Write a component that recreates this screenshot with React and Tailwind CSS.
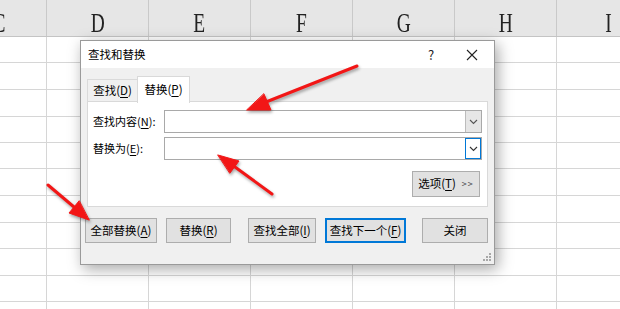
const cols = ["D", "E", "F", "G", "H"];
const rowHeights = [26, 27, 27, 26, 26, 27, 27, 26, 27, 26, 27];

const U = ({ children }) => <span className="underline underline-offset-2">{children}</span>;

const Chevron = ({ color = "#555" }) => (
    <svg width="9" height="6" viewBox="0 0 9 6">
        <path d="M1 1 L4.5 4.5 L8 1" fill="none" stroke={color} strokeWidth="1.1" />
    </svg>
);

const Btn = ({ children, className = "", focused }) => (
    <div
        className={`h-[25px] flex items-center justify-center bg-[#e1e1e1] text-[11.5px] text-black ${focused ? "border-2 border-[#0078d7]" : "border border-[#adadad]"} ${className}`}
    >
        {children}
    </div>
);

const ComboBox = ({ focused }) => (
    <div className="flex-1 h-[23px] flex border border-[#a9a9a9] bg-white">
        <div className="flex-1"></div>
        {focused ? (
            <div className="w-[16px] h-full flex items-center justify-center border border-[#0078d7] bg-white">
                <Chevron color="#333" />
            </div>
        ) : (
            <div className="w-[16px] h-full flex items-center justify-center border-l border-[#bcbcbc] bg-[#e6e6e6]">
                <Chevron />
            </div>
        )}
    </div>
);

const Sheet = () => (
    <div className="flex flex-col w-[620px] h-[309px] overflow-hidden bg-white">
        <div className="flex h-[37px] bg-[#e6e6e6] border-b border-[#c4c4c4] shrink-0">
            <div className="w-[47px] shrink-0 border-r border-[#c9c9c9] overflow-hidden relative">
                <div className="w-[102px] ml-[-52px] text-center pt-[10px]">
                    <span className="inline-block text-[27px] leading-[27px] scale-x-[0.72] text-[#222]">C</span>
                </div>
            </div>
            {cols.map((c) => (
                <div key={c} className="w-[102px] shrink-0 border-r border-[#c9c9c9] text-center pt-[10px]">
                    <span className="inline-block text-[27px] leading-[27px] scale-x-[0.72] text-[#222]">{c}</span>
                </div>
            ))}
            <div className="flex-1 text-center pt-[10px] overflow-hidden">
                <div className="w-[102px]">
                    <span className="inline-block text-[27px] leading-[27px] scale-x-[0.72] text-[#222]">I</span>
                </div>
            </div>
        </div>
        {rowHeights.map((h, i) => (
            <div key={i} className="flex shrink-0 border-b border-[#d6d6d6]" style={{ height: h }}>
                <div className="w-[47px] shrink-0 border-r border-[#d6d6d6]"></div>
                {cols.map((c) => (
                    <div key={c} className="w-[102px] shrink-0 border-r border-[#d6d6d6]"></div>
                ))}
                <div className="flex-1"></div>
            </div>
        ))}
    </div>
);

const Dialog = () => (
    <div className="absolute left-[80px] top-[40px] w-[415px] h-[225px] flex flex-col border border-[#9a9a9a] bg-[#f0f0f0] shadow-[3px_4px_14px_rgba(0,0,0,0.35)]">
        {/* title bar */}
        <div className="h-[27px] shrink-0 bg-white flex items-center pl-[7px] text-[11.5px] text-black">
            <span className="flex-1">查找和替换</span>
            <span className="w-[12px] text-[13px] mr-[26px] text-[#222]">?</span>
            <svg width="12" height="12" viewBox="0 0 12 12" className="mr-[16px]">
                <path d="M1 1 L11 11 M11 1 L1 11" stroke="#222" strokeWidth="1.1" />
            </svg>
        </div>

        {/* tabs */}
        <div className="flex pl-[6px] pt-[8px] h-[34px] shrink-0 text-[11.5px] text-black relative z-10">
            <div className="mt-[3px] h-[23px] w-[50px] flex items-center justify-center border-l border-t border-[#dadada]">
                查找(<U>D</U>)
            </div>
            <div className="h-[27px] w-[53px] flex items-center justify-center bg-white border border-b-0 border-[#d9d9d9]">
                替换(<U>P</U>)
            </div>
        </div>

        {/* panel */}
        <div className="mx-[6px] h-[106px] shrink-0 bg-white border border-[#d9d9d9] -mt-px flex flex-col px-[5px] pt-[8px] text-[11px] text-black">
            <div className="flex items-center">
                <span className="w-[71px] shrink-0 whitespace-nowrap">查找内容(<U>N</U>):</span>
                <ComboBox />
            </div>
            <div className="flex items-center mt-[4px]">
                <span className="w-[71px] shrink-0 whitespace-nowrap">替换为(<U>E</U>):</span>
                <ComboBox focused />
            </div>
            <div className="flex justify-end mt-[11px] pr-[2px]">
                <Btn className="w-[68px] h-[26px] gap-[6px]">
                    <span>选项(<U>T</U>)</span>
                    <span className="text-[9px] tracking-[1px] text-[#444]">&gt;&gt;</span>
                </Btn>
            </div>
        </div>

        {/* bottom buttons */}
        <div className="flex pl-[4px] mt-[11px]">
            <Btn className="w-[72px]">全部替换(<U>A</U>)</Btn>
            <Btn className="w-[65px] ml-[9px]">替换(<U>R</U>)</Btn>
            <Btn className="w-[68px] ml-[17px]">查找全部(<U>I</U>)</Btn>
            <Btn className="w-[81px] ml-[9px]" focused>查找下一个(<U>F</U>)</Btn>
            <Btn className="w-[66px] ml-[16px]">关闭</Btn>
        </div>

        {/* resize grip */}
        <svg width="10" height="10" viewBox="0 0 10 10" className="absolute right-[2px] bottom-[2px]">
            <g fill="#a8a8a8">
                <rect x="7" y="1" width="2" height="2" />
                <rect x="4" y="4" width="2" height="2" />
                <rect x="7" y="4" width="2" height="2" />
                <rect x="1" y="7" width="2" height="2" />
                <rect x="4" y="7" width="2" height="2" />
                <rect x="7" y="7" width="2" height="2" />
            </g>
        </svg>
    </div>
);

const Arrows = () => (
    <svg
        width="620"
        height="309"
        viewBox="0 0 620 309"
        className="absolute left-0 top-0 pointer-events-none drop-shadow-[1px_2px_1.5px_rgba(0,0,0,0.35)]"
    >
        <g stroke="#f21616" strokeWidth="3" strokeLinecap="round" fill="#f21616">
            <line x1="357" y1="66" x2="266" y2="102" />
            <polygon points="247,110 271,110 264,94" strokeWidth="1" strokeLinejoin="round" />
            <line x1="272" y1="194" x2="235" y2="167" />
            <polygon points="218,155 239,161 230,173" strokeWidth="1" strokeLinejoin="round" />
            <line x1="48" y1="185" x2="74" y2="207" />
            <polygon points="89,220 69,213 79,201" strokeWidth="1" strokeLinejoin="round" />
        </g>
    </svg>
);

export default function App() {
    return (
        <div className="relative w-[620px] h-[309px] overflow-hidden" style={{ fontFamily: '"Liberation Serif", serif' }}>
            <Sheet />
            <div style={{ fontFamily: '"Noto Sans CJK SC", "Noto Sans", sans-serif' }}>
                <Dialog />
            </div>
            <Arrows />
        </div>
    );
}
